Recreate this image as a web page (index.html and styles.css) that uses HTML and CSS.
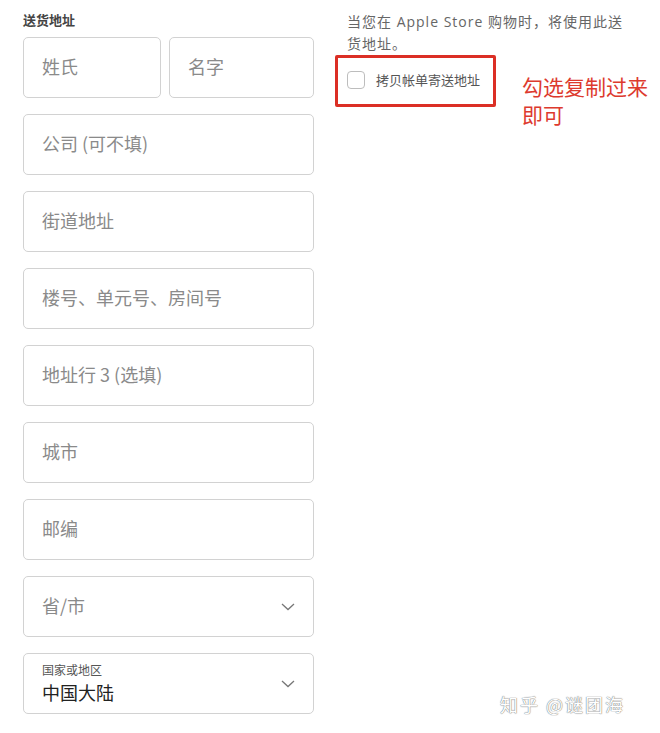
FILE: index.html
```html
<!DOCTYPE html>
<html lang="zh">
<head>
<meta charset="utf-8">
<link rel="stylesheet" href="styles.css">
</head>
<body>
<div class="page">
  <div class="left">
    <div class="title">送货地址</div>
    <div class="name-row">
      <div class="field"><span class="ph">姓氏</span></div>
      <div class="field"><span class="ph">名字</span></div>
    </div>
    <div class="field"><span class="ph">公司 (可不填)</span></div>
    <div class="field"><span class="ph">街道地址</span></div>
    <div class="field"><span class="ph">楼号、单元号、房间号</span></div>
    <div class="field"><span class="ph">地址行 3 (选填)</span></div>
    <div class="field"><span class="ph">城市</span></div>
    <div class="field"><span class="ph">邮编</span></div>
    <div class="field select"><span class="ph">省/市</span>
      <svg class="chev" width="14" height="8" viewBox="0 0 14 8"><path d="M1 1l6 5.5L13 1" fill="none" stroke="#777" stroke-width="1.3"/></svg>
    </div>
    <div class="field select country">
      <div class="stack"><span class="lbl">国家或地区</span><span class="val">中国大陆</span></div>
      <svg class="chev" width="14" height="8" viewBox="0 0 14 8"><path d="M1 1l6 5.5L13 1" fill="none" stroke="#777" stroke-width="1.3"/></svg>
    </div>
  </div>
  <div class="right">
    <p class="info">当您在 Apple Store 购物时，将使用此送货地址。</p>
    <div class="annot-row">
      <div class="redbox">
        <span class="check"></span>
        <span class="clabel">拷贝帐单寄送地址</span>
      </div>
      <div class="note">勾选复制过来<br>即可</div>
    </div>
  </div>
</div>
<div class="watermark">知乎 @谜团海</div>
</body>
</html>
```
FILE: styles.css
```css
html, body {
  margin: 0;
  padding: 0;
  background: #fff;
}
body {
  font-family: "Noto Sans CJK SC", "Liberation Sans", sans-serif;
  width: 660px;
  height: 733px;
  overflow: hidden;
  position: relative;
}
.page {
  display: flex;
  padding: 11px 0 0 23px;
}
.left {
  width: 291px;
  flex-shrink: 0;
  display: flex;
  flex-direction: column;
  gap: 16px;
}
.title {
  font-size: 13px;
  font-weight: bold;
  color: #444;
  line-height: 18px;
  margin-bottom: -8px;
}
.name-row {
  display: grid;
  grid-template-columns: 138px 1fr;
  gap: 8px;
}
.field {
  height: 59px;
  border: 1px solid #d2d2d2;
  border-radius: 5px;
  box-sizing: content-box;
  display: flex;
  align-items: center;
  padding: 0 18px;
}
.ph {
  font-size: 18px;
  color: #8a8a8a;
  line-height: 24px;
  margin-top: -3px;
}
.select {
  justify-content: space-between;
  padding-right: 18px;
}
.chev {
  display: block;
}
.stack {
  display: flex;
  flex-direction: column;
  gap: 4px;
  margin-top: -2px;
}
.lbl {
  font-size: 12px;
  color: #555;
  line-height: 14px;
}
.val {
  font-size: 18px;
  color: #222;
  line-height: 22px;
}
.right {
  margin-left: 21px;
  width: 325px;
  flex-shrink: 0;
}
.info {
  margin: 0 0 0 12px;
  font-family: "Open Sans", "Noto Sans CJK SC", sans-serif;
  font-size: 14px;
  line-height: 22px;
  color: #666;
  width: 282px;
  letter-spacing: 1px;
}
.annot-row {
  display: flex;
  align-items: flex-start;
}
.redbox {
  width: 146px;
  height: 46px;
  flex-shrink: 0;
  border: 3px solid #db2f25;
  border-radius: 2px;
  display: flex;
  align-items: center;
  padding-left: 9px;
  box-sizing: content-box;
  gap: 11px;
}
.check {
  width: 16px;
  height: 16px;
  flex-shrink: 0;
  border: 1px solid #bdbdbd;
  border-radius: 4px;
  margin-top: -2px;
}
.clabel {
  font-size: 13px;
  color: #555;
  margin-top: -4px;
  white-space: nowrap;
}
.note {
  margin-left: 26px;
  margin-top: 17px;
  font-size: 21px;
  line-height: 28px;
  color: #dd3a2e;
  white-space: nowrap;
}
.watermark {
  position: absolute;
  left: 500px;
  top: 691px;
  font-size: 18px;
  color: #fff;
  text-shadow: 0 0 1px #777, 0 0 1px #777;
  letter-spacing: 2px;
}
```
